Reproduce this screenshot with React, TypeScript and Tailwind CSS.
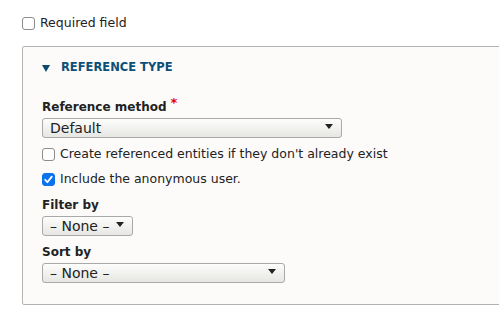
import React from "react";

const font = { fontFamily: '"DejaVu Sans", "Liberation Sans", sans-serif' };

function Check({ checked, label }: { checked?: boolean; label: string }) {
  return (
    <label className="flex h-[16px] items-center gap-[5px] text-[12.5px] text-[#222]">
      <span className="relative flex h-[13px] w-[13px] shrink-0">
        <input
          type="checkbox"
          defaultChecked={checked}
          className="m-0 h-[13px] w-[13px] appearance-none rounded-[3px] border border-[#8c8c8c] bg-white checked:border-[#0b72ee] checked:bg-[#0b72ee]"
        />
        {checked && (
          <svg
            viewBox="0 0 13 13"
            className="pointer-events-none absolute inset-0 h-[13px] w-[13px]"
          >
            <path
              d="M3.2 6.8 L5.4 9.2 L9.8 3.6"
              fill="none"
              stroke="#fff"
              strokeWidth="1.8"
              strokeLinecap="round"
              strokeLinejoin="round"
            />
          </svg>
        )}
      </span>
      <span>{label}</span>
    </label>
  );
}

function Select({ value, width }: { value: string; width: string }) {
  return (
    <div className={`relative h-[20px] ${width}`}>
      <select
        defaultValue={value}
        className="h-[20px] w-full appearance-none rounded-[3px] border border-[#a9a9a9] bg-gradient-to-b from-[#fdfdfc] to-[#e6e6e3] pl-[7px] text-[14px] leading-[18px] text-[#222] outline-none"
        style={font}
      >
        <option>{value}</option>
      </select>
      <svg
        viewBox="0 0 8 5"
        className="pointer-events-none absolute right-[9px] top-[8px] h-[5px] w-[8px]"
      >
        <path d="M0 0 H8 L4 5 Z" fill="#222" />
      </svg>
    </div>
  );
}

function FieldLabel({ children }: { children: React.ReactNode }) {
  return (
    <div className="flex h-[16px] items-center text-[12px] font-bold text-[#222]">
      {children}
    </div>
  );
}

export default function App() {
  return (
    <div className="h-[309px] w-[499px] overflow-hidden bg-white pt-[15px]" style={font}>
      <div className="pl-[22px]">
        <Check label="Required field" />
      </div>

      <div className="ml-[22px] mr-[-20px] mt-[15px] rounded-[2px] border border-[#b3b3b3] bg-[#fcfbfa] pb-[23px] pl-[19px] pt-[13px]">
        <div className="flex h-[16px] items-center">
          <svg viewBox="0 0 8 7" className="h-[7px] w-[8px] shrink-0">
            <path d="M0 0 H8 L4 7 Z" fill="#0d4a6e" />
          </svg>
          <span className="ml-[11px] text-[11.5px] font-bold uppercase text-[#0d4f78]">
            Reference type
          </span>
        </div>

        <div className="mt-[23px]">
          <FieldLabel>
            Reference method
            <span className="ml-[4px] -translate-y-[4px] text-[13px] text-[#e4000f]">*</span>
          </FieldLabel>
        </div>
        <div className="mt-[1px]">
          <Select value="Default" width="w-[300px]" />
        </div>

        <div className="mt-[10px]">
          <Check label="Create referenced entities if they don't already exist" />
        </div>
        <div className="mt-[9px]">
          <Check checked label="Include the anonymous user." />
        </div>

        <div className="mt-[10px]">
          <FieldLabel>Filter by</FieldLabel>
        </div>
        <div className="mt-[1px]">
          <Select value="– None –" width="w-[91px]" />
        </div>

        <div className="mt-[10px]">
          <FieldLabel>Sort by</FieldLabel>
        </div>
        <div className="mt-[1px]">
          <Select value="– None –" width="w-[243px]" />
        </div>
      </div>
    </div>
  );
}
